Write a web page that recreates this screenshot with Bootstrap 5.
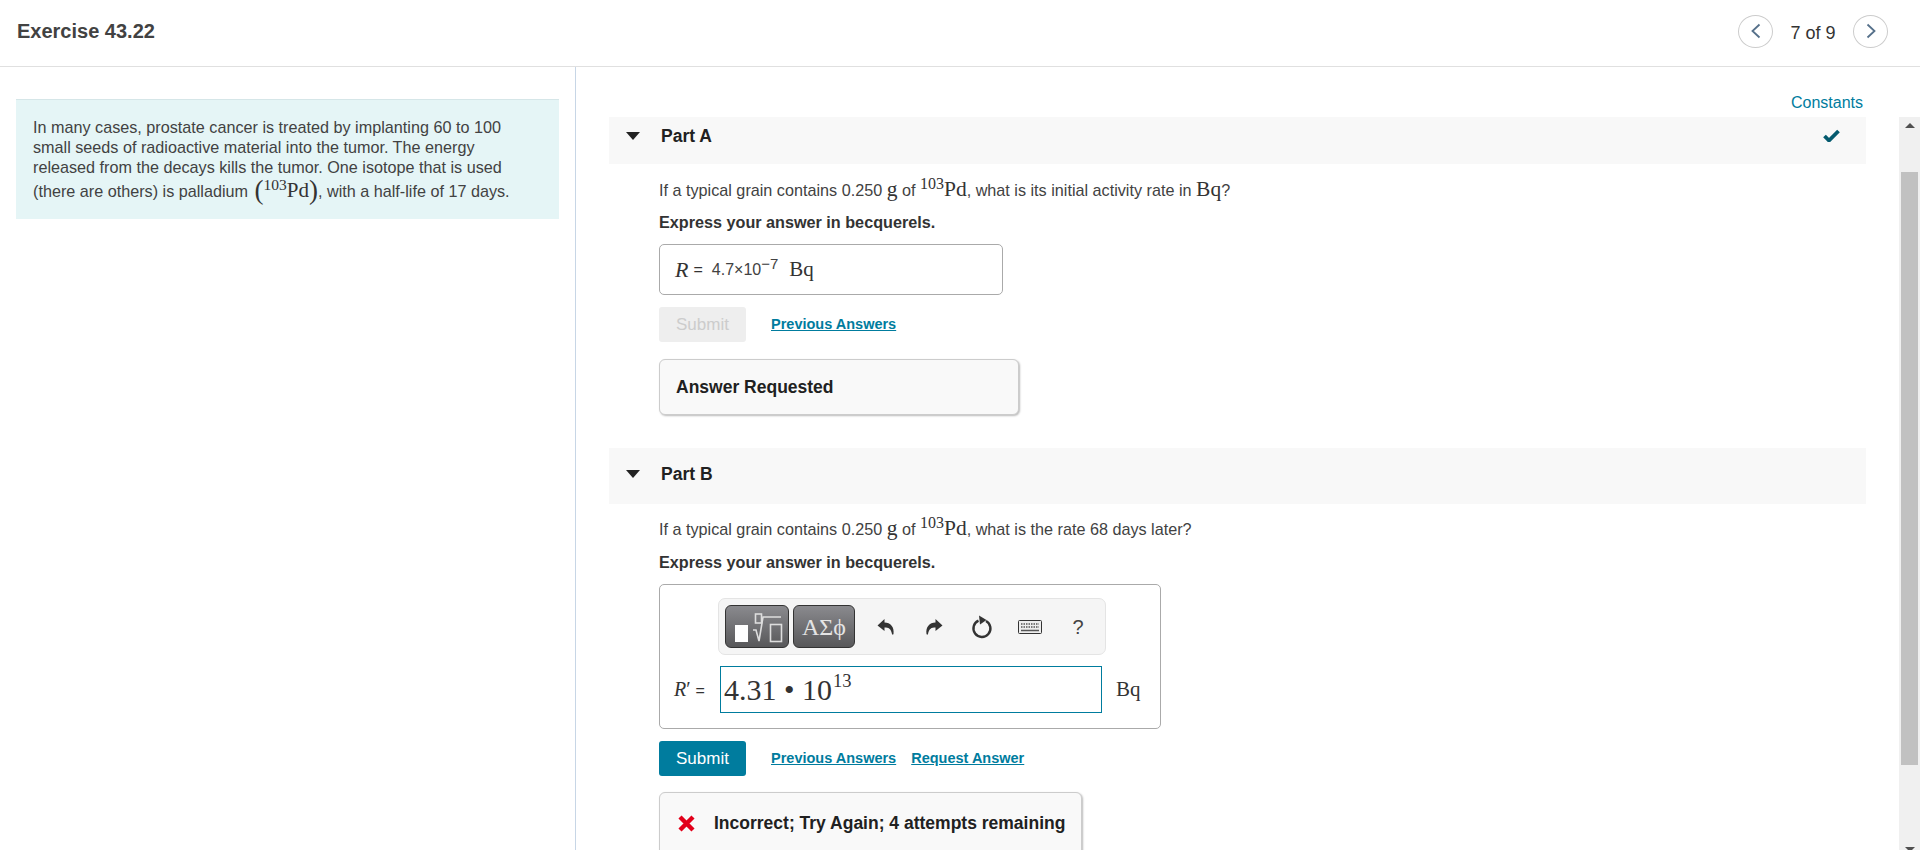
<!DOCTYPE html>
<html lang="en">
<head>
<meta charset="utf-8">
<title>Exercise 43.22</title>
<link href="https://cdn.jsdelivr.net/npm/bootstrap@5.3.0/dist/css/bootstrap.min.css" rel="stylesheet">
<style>
html,body{height:850px;overflow:hidden;background:#fff}
body{font-family:"Liberation Sans",Arial,sans-serif;font-size:16px;line-height:20px;color:#333}
.top-bar{height:67px;border-bottom:1px solid #e0e0e0;padding:0 32px 0 17px}
.ex-title{font-size:20px;font-weight:700;color:#424242;margin:0;line-height:28px;padding-bottom:4px}
.pager-circle{width:35px;height:33px;border:1px solid #ccc;border-radius:50%;background:#fff;padding:0;margin-bottom:4px}
.pager-label{font-size:18px;color:#333;width:80px;text-align:center;margin-bottom:0}
.main-area{height:783px}
.left-pane{width:576px;flex:none;border-right:1px solid #c7d6e6;padding:32px 16px 0}
.intro-box{background:#e5f5f6;border-top:1px solid #d5e6e8;height:120px;padding:17px 17px 0;font-size:16.2px;color:#424242}
.intro-box p{margin:0}
.intro-box .last-line{margin-top:3px;white-space:nowrap}
.math{font-family:"Liberation Serif",serif;color:#333}
.math-lg{font-size:21px}
.math-sup{font-size:15.5px;vertical-align:7px;line-height:0}
.paren{font-family:"Liberation Serif",serif;font-size:27px;line-height:20px;vertical-align:-2px;font-weight:300}
.intro-box .math{margin-left:2px}
.right-pane{min-width:0}
.content-col{padding:26px 33px 0;min-width:0}
.constants{color:#007c9e;text-align:right;font-size:16px;margin-right:3px;height:24px}
.part-bar{background:#f8f8f8;padding:0 26px 0 17px;font-size:17.5px;font-weight:700;color:#212121}
.bar-a{height:47px;padding-bottom:10px}
.bar-b{height:56px;margin-top:33px;padding-bottom:5px}
.part-name{margin-left:21px}
.part-body{padding-left:50px}
.q-line{margin-top:15px;height:20px;font-size:16.2px;color:#424242;white-space:nowrap}
.q-line-b{margin-top:14px}
.q-line .math{font-size:21.5px}
.q-line .math-sup{font-size:16px}
.hint{margin-top:13px;height:20px;font-weight:700;font-size:16.2px;color:#333}
.hint-b{margin-top:14px}
.ans-box{margin-top:12px;width:344px;height:51px;border:1px solid #aaa;border-radius:5px;padding-left:15px;background:#fff}
.ans-r{font-family:"Liberation Serif",serif;font-style:italic;font-size:22px}
.ans-eq{font-size:16px;margin:0 9px 0 5px}
.ans-val{font-size:16px;color:#424242}
.ans-val sup{font-size:15px;top:-.4em}
.ans-unit{font-family:"Liberation Serif",serif;font-size:21px;margin-left:11px;padding-bottom:2px}
.action-row{margin-top:12px;height:35px}
.btn-go{width:87px;height:35px;padding:0;border-radius:3px;font-size:17px;border:0;background:#007c9e;color:#fff}
.btn-go:disabled{background:#eee;color:#ccc;opacity:1}
.link-act{color:#007c9e;font-weight:700;font-size:14.5px;text-decoration:underline;margin-left:25px;padding-bottom:1px}
.link-act + .link-act{margin-left:15px}
.fb-box{margin-top:17px;height:56px;background:#f9f9f9;border:1px solid #ccc;border-radius:6px;box-shadow:1px 1px 2px #bbb;font-size:17.5px;font-weight:700;color:#212121;padding-left:16px}
.fb-a{width:360px}
.fb-b{width:423px;margin-top:16px;padding-left:18px;gap:19px;height:80px;padding-bottom:18px}
.edit-box{margin-top:12px;width:502px;height:145px;border:1px solid #aaa;border-radius:5px;padding:13px 0 0}
.tools{margin-left:58px;width:388px;height:57px;background:#f5f5f5;border:1px solid #e4e4e4;border-radius:7px;padding-left:6px}
.tool-key{height:43px;border:1px solid #333;border-radius:6px;background:linear-gradient(#8a8a8e,#58585a);padding:0;color:#e4e4e4;font-family:"Liberation Serif",serif;font-size:24px;line-height:1}
.tool-a{width:64px}
.tool-b{width:62px;margin-left:4px}
.tool-strip{margin-left:19px;gap:24px}
.tool-icon{width:24px;text-align:center;flex:none;color:#333}
.tool-q{font-size:20px;color:#444}
.input-row{margin-top:11px;padding-left:14px}
.r-label{width:46px;flex:none;font-family:"Liberation Serif",serif;font-size:20px;white-space:nowrap}
.r-label span{font-family:"Liberation Sans",sans-serif;font-size:16px;margin-left:5px}
.field{width:382px;height:47px;flex:none;border:1px solid #007c9e;padding-left:3px;font-family:"Liberation Serif",serif;font-size:30px;line-height:45px;color:#333;white-space:nowrap}
.field sup{font-size:18.5px;top:-.72em;margin-left:1px}
.unit-b{font-family:"Liberation Serif",serif;font-size:21px;margin-left:14px;padding-bottom:2px}
.scroll-track{width:21px;flex:none;margin-top:50px;background:#f0f0f0;height:733px;padding-top:6px}
.scroll-arrow-up{width:0;height:0;margin:0 auto;border:5px solid transparent;border-top:0;border-bottom:5px solid #505050}
.scroll-thumb{width:17px;height:593px;margin:44px auto 0;background:#c1c1c1}
.scroll-arrow-down{width:0;height:0;margin:82px auto 0;border:5px solid transparent;border-bottom:0;border-top:5px solid #505050}
</style>
</head>
<body>
<header class="top-bar d-flex align-items-center justify-content-between">
  <h1 class="ex-title">Exercise 43.22</h1>
  <nav class="d-flex align-items-center" aria-label="Pages">
    <button class="pager-circle d-flex align-items-center justify-content-center" aria-label="Previous"><svg width="12" height="16" viewBox="0 0 12 16"><path d="M9.500 1.500 2.500 8l7 6.500" fill="none" stroke="#55708a" stroke-width="1.800"/></svg></button>
    <span class="pager-label">7 of 9</span>
    <button class="pager-circle d-flex align-items-center justify-content-center" aria-label="Next"><svg width="12" height="16" viewBox="0 0 12 16"><path d="M2.500 1.500 9.500 8l-7 6.500" fill="none" stroke="#55708a" stroke-width="1.800"/></svg></button>
  </nav>
</header>
<div class="main-area d-flex">
  <aside class="left-pane">
    <div class="intro-box">
      <p>In many cases, prostate cancer is treated by implanting 60 to 100<br>small seeds of radioactive material into the tumor. The energy<br>released from the decays kills the tumor. One isotope that is used</p>
      <p class="last-line">(there are others) is palladium <span class="math"><span class="paren">(</span><span class="math-sup">103</span><span class="math-lg">Pd</span><span class="paren">)</span></span>, with a half-life of 17 days.</p>
    </div>
  </aside>
  <div class="right-pane flex-grow-1 d-flex">
    <main class="content-col flex-grow-1">
      <div class="constants">Constants</div>
      <section>
        <div class="part-bar bar-a d-flex align-items-center justify-content-between">
          <div class="d-flex align-items-center">
            <svg width="14" height="8" viewBox="0 0 14 8"><path d="M0 0h14L7 8z" fill="#222"/></svg>
            <span class="part-name">Part A</span>
          </div>
          <svg width="17" height="13" viewBox="0 0 17 13"><path d="M1.500 7 6 11.500 15.500 2" fill="none" stroke="#045a6e" stroke-width="3.800"/></svg>
        </div>
        <div class="part-body">
          <div class="q-line">If a typical grain contains 0.250 <span class="math">g</span> of <span class="math"><span class="math-sup">103</span>Pd</span>, what is its initial activity rate in <span class="math">Bq</span>?</div>
          <div class="hint">Express your answer in becquerels.</div>
          <div class="ans-box d-flex align-items-center"><span class="ans-r">R</span><span class="ans-eq">=</span><span class="ans-val">4.7×10<sup>−7</sup></span><span class="ans-unit">Bq</span></div>
          <div class="action-row d-flex align-items-center">
            <button class="btn btn-go" disabled>Submit</button>
            <a href="#" class="link-act">Previous Answers</a>
          </div>
          <div class="fb-box fb-a d-flex align-items-center">Answer Requested</div>
        </div>
      </section>
      <section>
        <div class="part-bar bar-b d-flex align-items-center">
          <svg width="14" height="8" viewBox="0 0 14 8"><path d="M0 0h14L7 8z" fill="#222"/></svg>
          <span class="part-name">Part B</span>
        </div>
        <div class="part-body">
          <div class="q-line q-line-b">If a typical grain contains 0.250 <span class="math">g</span> of <span class="math"><span class="math-sup">103</span>Pd</span>, what is the rate 68 days later?</div>
          <div class="hint hint-b">Express your answer in becquerels.</div>
          <div class="edit-box">
            <div class="tools d-flex align-items-center">
              <button class="tool-key tool-a d-flex align-items-center justify-content-center" aria-label="Templates">
                <svg width="52" height="33" viewBox="0 0 52 33"><rect x="4" y="15" width="13" height="17" fill="#fff"/><rect x="24.500" y="4" width="6" height="9" fill="none" stroke="#ddd" stroke-width="1.600"/><path d="M22 20l3 0 3 11 4-24h18" fill="none" stroke="#ddd" stroke-width="1.600"/><rect x="39.500" y="14.500" width="11" height="17" fill="none" stroke="#ddd" stroke-width="1.600"/></svg>
              </button>
              <button class="tool-key tool-b">ΑΣϕ</button>
              <div class="tool-strip d-flex align-items-center">
                <div class="tool-icon"><svg width="20" height="20" viewBox="0 0 20 20"><path d="M8.500 2 1.500 8.500 8.500 14v-3.500c4 0 6.500 1 7.500 6.500.5 1 1 1 1.500 0C18.500 10 14.500 5.500 8.500 5.500z" fill="#333"/></svg></div>
                <div class="tool-icon"><svg width="20" height="20" viewBox="0 0 20 20"><path d="M11.500 2l7 6.500-7 5.500v-3.500c-4 0-6.500 1-7.500 6.500-.5 1-1 1-1.500 0C1.500 10 5.500 5.500 11.500 5.500z" fill="#333"/></svg></div>
                <div class="tool-icon"><svg width="22" height="24" viewBox="0 0 22 24"><path d="M15 6a8.500 8.500 0 1 1-7.500-.3" fill="none" stroke="#333" stroke-width="2.400"/><path d="M8 .5l7.500 4.500L9 9.500z" fill="#333"/></svg></div>
                <div class="tool-icon"><svg width="24" height="14" viewBox="0 0 24 14"><rect x=".5" y=".5" width="23" height="13" rx="1" fill="#eee" stroke="#333"/><path d="M3 4h18M3 7h18" stroke="#555" stroke-width="1.500" stroke-dasharray="1.500 1"/><path d="M3 10.500h18" stroke="#555" stroke-width="1.500"/></svg></div>
                <div class="tool-icon tool-q">?</div>
              </div>
            </div>
            <div class="input-row d-flex align-items-center">
              <div class="r-label"><i>R</i>′<span>=</span></div>
              <div class="field">4.31 • 10<sup>13</sup></div>
              <span class="unit-b">Bq</span>
            </div>
          </div>
          <div class="action-row d-flex align-items-center">
            <button class="btn btn-go">Submit</button>
            <a href="#" class="link-act">Previous Answers</a>
            <a href="#" class="link-act">Request Answer</a>
          </div>
          <div class="fb-box fb-b d-flex align-items-center">
            <svg width="17" height="17" viewBox="0 0 17 17"><path d="M2 2l13 13M15 2 2 15" stroke="#e2001a" stroke-width="4.400"/></svg>
            <span>Incorrect; Try Again; 4 attempts remaining</span>
          </div>
        </div>
      </section>
    </main>
    <div class="scroll-track" aria-hidden="true">
      <div class="scroll-arrow-up"></div>
      <div class="scroll-thumb"></div>
      <div class="scroll-arrow-down"></div>
    </div>
  </div>
</div>
<script src="https://cdn.jsdelivr.net/npm/bootstrap@5.3.0/dist/js/bootstrap.bundle.min.js"></script>
</body>
</html>
